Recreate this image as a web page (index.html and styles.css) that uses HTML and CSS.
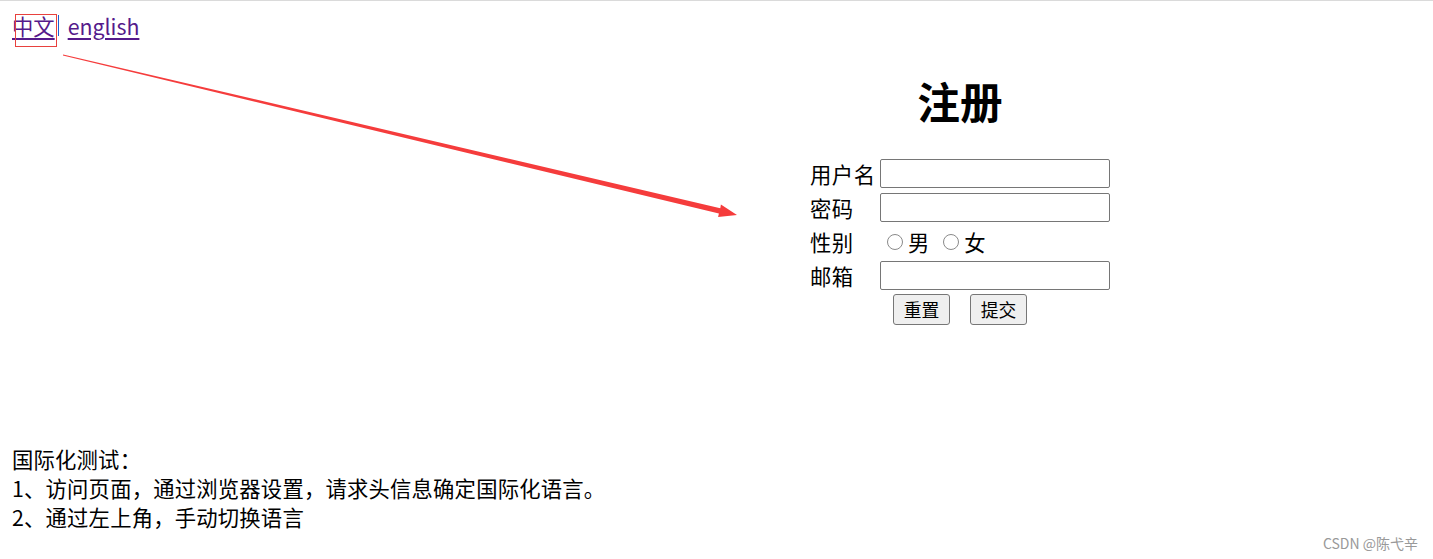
FILE: index.html
```html
<!DOCTYPE html>
<html lang="zh">
<head>
<meta charset="utf-8">
<title>注册</title>
<link rel="stylesheet" href="styles.css">
</head>
<body>
<div class="page">
  <div class="langs">
    <a href="#" class="lang">中文</a><span class="caret"></span>
    <a href="#" class="lang">english</a>
  </div>

  <div class="register">
    <h1 class="title">注册</h1>
    <form class="form">
      <label class="lbl">用户名</label>
      <input class="field" type="text">
      <label class="lbl">密码</label>
      <input class="field" type="password">
      <span class="lbl">性别</span>
      <div class="radios">
        <label class="opt"><input class="radio" type="radio" name="sex">男</label>
        <label class="opt"><input class="radio" type="radio" name="sex">女</label>
      </div>
      <label class="lbl">邮箱</label>
      <input class="field" type="text">
      <div class="actions">
        <button class="btn" type="reset">重置</button>
        <button class="btn" type="submit">提交</button>
      </div>
    </form>
  </div>

  <div class="notes">
    <div>国际化测试：</div>
    <div>1、访问页面，通过浏览器设置，请求头信息确定国际化语言。</div>
    <div>2、通过左上角，手动切换语言</div>
  </div>

  <div class="mark-box"></div>
  <svg class="arrow" width="1433" height="559" viewBox="0 0 1433 559">
    <path d="M63.1 54.4 L720.3 208.2 L720.9 204.6 L737 215 L718.1 217 L718.9 213.4 L62.9 55.6 Z" fill="#f53c3c"/>
  </svg>
  <div class="watermark">CSDN @陈弋辛</div>
</div>
</body>
</html>
```

FILE: styles.css
```css
html, body {
  margin: 0;
  padding: 0;
  background: #fff;
}
body {
  font-family: "Noto Sans CJK SC", "Microsoft YaHei", "Liberation Sans", sans-serif;
  font-size: 21.33px;
  color: #000;
}
.page {
  position: relative;
  width: 1433px;
  height: 559px;
  box-sizing: border-box;
  border-top: 1px solid #dadada;
  padding: 10px 0 0 12px;
  overflow: hidden;
}
.langs {
  display: flex;
  align-items: center;
  height: 29px;
  line-height: 29px;
}
.lang {
  color: #551a8b;
  text-decoration: underline;
  text-underline-offset: 3px;
}
.caret {
  width: 1px;
  height: 21px;
  background: #1b5fd0;
  margin: 0 9px 0 3px;
}
.register {
  width: 300px;
  margin: 33px 0 0 798px;
}
.title {
  margin: 0;
  font-size: 42.67px;
  font-weight: bold;
  line-height: 56px;
  text-align: center;
}
.form {
  margin-top: 30px;
  display: grid;
  grid-template-columns: 70px 230px;
  grid-auto-rows: 29px;
  row-gap: 5px;
  align-items: center;
}
.lbl {
  line-height: 29px;
  white-space: nowrap;
  letter-spacing: 0.5px;
}
.field {
  box-sizing: border-box;
  width: 230px;
  height: 29px;
  margin: 0;
  border: 1px solid #767676;
  border-radius: 2px;
  background: #fff;
}
.radios {
  display: flex;
  align-items: center;
  padding-left: 7px;
  gap: 14px;
}
.opt {
  display: flex;
  align-items: center;
  gap: 5px;
}
.radio {
  appearance: none;
  -webkit-appearance: none;
  flex: none;
  width: 16px;
  height: 16px;
  margin: 0;
  box-sizing: border-box;
  border: 1px solid #8a8a8a;
  border-radius: 50%;
  background: #fff;
}
.actions {
  grid-column: 1 / span 2;
  display: flex;
  justify-content: center;
  gap: 20px;
  height: 31px;
}
.btn {
  box-sizing: border-box;
  width: 57px;
  height: 31px;
  padding: 0;
  font-family: "Noto Sans CJK SC", "Microsoft YaHei", sans-serif;
  font-size: 17.8px;
  line-height: 1;
  color: #000;
  background: #efefef;
  border: 1px solid #767676;
  border-radius: 3px;
}
.notes {
  margin-top: 120px;
  line-height: 29px;
  letter-spacing: 0.2px;
}
.mark-box {
  position: absolute;
  left: 15px;
  top: 13px;
  width: 42px;
  height: 33px;
  border: 1px solid #e8413e;
  box-sizing: border-box;
}
.arrow {
  position: absolute;
  left: 0;
  top: -1px;
  pointer-events: none;
}
.watermark {
  position: absolute;
  right: 15px;
  bottom: 6px;
  font-size: 14px;
  line-height: 20px;
  color: #999;
}
```
